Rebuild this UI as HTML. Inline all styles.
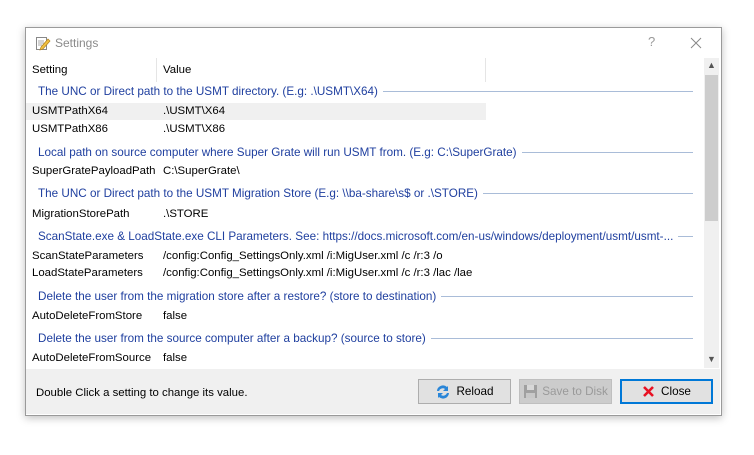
<!DOCTYPE html>
<html><head><style>
body{margin:0;width:754px;height:455px;background:#fff;font-family:"Liberation Sans",sans-serif;font-size:11.4px;color:#000;position:relative;overflow:hidden}
.a{position:absolute;white-space:nowrap}
#win{position:absolute;left:25px;top:27px;width:695px;height:387px;border:1px solid #9a9a9a;background:#fff;box-shadow:0 2px 8px rgba(0,0,0,.25)}
.g{position:absolute;left:38px;width:655px;height:14px;display:flex;align-items:center;color:#1f3f9f;font-size:11.7px}
.g:after{content:"";flex:1;height:1px;background:#a9bcd8;margin-left:5px}
.r{position:absolute;left:32px}
.v{position:absolute;left:163px}
.btn{position:absolute;top:379px;height:25px;border:1px solid #adadad;background:#e1e1e1;display:flex;align-items:center;justify-content:center;font-size:11.7px;box-sizing:border-box}
</style></head><body>
<div id="win"></div>
<svg class="a" style="left:35px;top:35px" width="16" height="16" viewBox="0 0 16 16"><rect x="1.5" y="2.5" width="10" height="12" fill="#fff" stroke="#888"/><path d="M3 6h6M3 8h6M3 10h4" stroke="#aaa"/><path d="M6 12l7-8 2 2-7 8-3 1z" fill="#f0c040" stroke="#b08020" stroke-width=".7"/></svg>
<div class="a" style="left:55px;top:36px;color:#8a8a8a;font-size:12px">Settings</div>
<div class="a" style="left:648px;top:34px;color:#999;font-size:13px">?</div>
<svg class="a" style="left:690px;top:37px" width="12" height="12"><path d="M1 1l10 10M11 1L1 11" stroke="#888" stroke-width="1"/></svg>
<div class="a" style="left:156px;top:58px;width:1px;height:24px;background:#e5e5e5"></div>
<div class="a" style="left:485px;top:58px;width:1px;height:24px;background:#e5e5e5"></div>
<div class="a" style="left:32px;top:64px">Setting</div>
<div class="a" style="left:163px;top:64px">Value</div>
<div class="a" style="left:26px;top:103px;width:460px;height:17px;background:#f0f0f0"></div>
<div class="g" style="top:84px">The UNC or Direct path to the USMT directory. (E.g: .\USMT\X64)</div>
<div class="r a" style="top:105px">USMTPathX64</div><div class="v a" style="top:105px">.\USMT\X64</div>
<div class="r a" style="top:123px">USMTPathX86</div><div class="v a" style="top:123px">.\USMT\X86</div>
<div class="g" style="top:145px">Local path on source computer where Super Grate will run USMT from. (E.g: C:\SuperGrate)</div>
<div class="r a" style="top:165px">SuperGratePayloadPath</div><div class="v a" style="top:165px">C:\SuperGrate\</div>
<div class="g" style="top:186px">The UNC or Direct path to the USMT Migration Store (E.g: \\ba-share\s$ or .\STORE)</div>
<div class="r a" style="top:208px">MigrationStorePath</div><div class="v a" style="top:208px">.\STORE</div>
<div class="g" style="top:229px;overflow:hidden">ScanState.exe &amp; LoadState.exe CLI Parameters. See: https://docs.microsoft.com/en-us/windows/deployment/usmt/usmt-...</div>
<div class="r a" style="top:250px">ScanStateParameters</div><div class="v a" style="top:250px">/config:Config_SettingsOnly.xml /i:MigUser.xml /c /r:3 /o</div>
<div class="r a" style="top:267px">LoadStateParameters</div><div class="v a" style="top:267px">/config:Config_SettingsOnly.xml /i:MigUser.xml /c /r:3 /lac /lae</div>
<div class="g" style="top:289px">Delete the user from the migration store after a restore? (store to destination)</div>
<div class="r a" style="top:310px">AutoDeleteFromStore</div><div class="v a" style="top:310px">false</div>
<div class="g" style="top:331px">Delete the user from the source computer after a backup? (source to store)</div>
<div class="r a" style="top:352px">AutoDeleteFromSource</div><div class="v a" style="top:352px">false</div>
<div class="a" style="left:704px;top:58px;width:15px;height:310px;background:#f0f0f0"></div>
<div class="a" style="left:705px;top:75px;width:13px;height:146px;background:#cdcdcd"></div>
<div class="a" style="left:707px;top:60px;font-size:9px;color:#555">&#9650;</div>
<div class="a" style="left:707px;top:354px;font-size:9px;color:#555">&#9660;</div>
<div class="a" style="left:26px;top:369px;width:694px;height:45px;background:#f0f0f0"></div>
<div class="a" style="left:36px;top:387px">Double Click a setting to change its value.</div>
<div class="btn" style="left:418px;width:93px"><svg width="16" height="16" viewBox="0 0 16 16" style="margin-right:5px"><path d="M2 7a6 6 0 0 1 10-4l1-1v5H8l2-2a4 4 0 0 0-6 2z" fill="#2a86d8"/><path d="M14 9a6 6 0 0 1-10 4l-1 1V9h5l-2 2a4 4 0 0 0 6-2z" fill="#2a86d8"/></svg>Reload</div>
<div class="btn" style="left:519px;width:93px;background:#ccc;border-color:#bfbfbf;color:#9a9a9a"><svg width="15" height="15" viewBox="0 0 15 15" style="margin-right:4px"><rect x="1" y="1" width="13" height="13" fill="#a0a0a0"/><rect x="4" y="1" width="7" height="5" fill="#d8d8d8"/><rect x="3" y="9" width="9" height="5" fill="#c8c8c8"/></svg>Save to Disk</div>
<div class="btn" style="left:620px;width:93px;border:2px solid #0078d7"><svg width="13" height="13" style="margin-right:6px"><path d="M2 2l9 9M11 2l-9 9" stroke="#e81123" stroke-width="2.6"/></svg>Close</div>
</body></html>
